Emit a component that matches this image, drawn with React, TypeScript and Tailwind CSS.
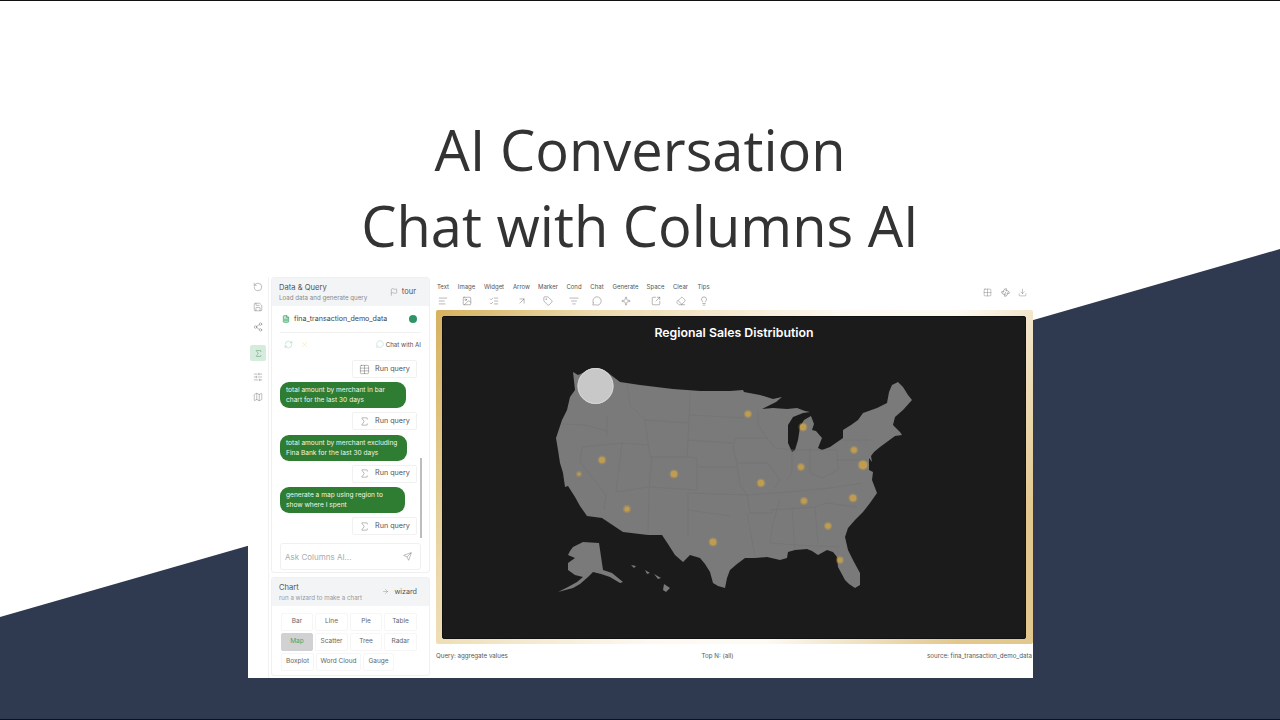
import React from "react";
import { RotateCcw, Save, Share2, Sigma, SlidersHorizontal, Map as MapIcon, Flag, Table, RefreshCw, X, MessageCircle, Send, ArrowRight, AlignLeft, Image as ImageIcon, ListChecks, ArrowUpRight, Tag, ListFilter, Sparkle, SquareArrowOutUpRight, Eraser, Lightbulb, Grid2x2, Download, Fan, FileSpreadsheet } from "lucide-react";

const US = "M573 372 L578 375 L583 373 L590 369 L597 368 L607 372 L620 382 L640 385 L673 389 L700 391 L730 391 L743 390 L744 392 L760 395 L773 399 L782 397 L776 402 L768 406 L762 409 L773 408 L787 409 L797 408 L805 411 L810 412 L803 413 L793 417 L788 425 L788 443 L792 452 L795 450 L798 440 L800 427 L804 420 L811 416 L814 424 L812 430 L816 431 L822 438 L818 448 L822 450 L830 447 L843 438 L843 430 L851 425 L858 420 L863 413 L877 408 L887 403 L889 392 L892 385 L898 382 L903 387 L908 395 L912 400 L903 410 L895 417 L893 425 L900 432 L902 435 L895 436 L880 447 L874 452 L871 456 L872 462 L869 458 L869 470 L873 472 L872 480 L877 493 L870 503 L863 512 L855 520 L848 528 L845 537 L848 550 L854 562 L860 573 L860 585 L855 588 L849 584 L845 580 L838 567 L837 557 L833 552 L827 550 L818 555 L812 551 L807 549 L795 550 L788 552 L787 558 L780 560 L767 557 L755 558 L745 558 L737 564 L730 570 L727 578 L725 588 L718 586 L713 583 L710 572 L705 564 L700 558 L690 555 L683 562 L675 555 L668 544 L662 535 L648 535 L623 532 L602 518 L587 516 L580 506 L575 497 L568 486 L565 487 L563 473 L560 463 L558 450 L556 438 L562 420 L567 410 L570 397 L575 390 Z";
const AK = "M573 547 L583 542 L599 543 L603 570 L612 573 L623 582 L620 583 L610 577 L601 574 L593 572 L588 577 L580 584 L573 588 L558 592 L568 587 L577 582 L583 577 L575 575 L568 570 L568 563 L575 558 L568 555 L570 551 Z";
const borders = "M562 424 L585 425 L607 431 M607 415 L607 437 M582 447 L622 443 M582 447 L580 462 L606 495 L604 510 M622 443 L616 492 L648 487 M627 384 L630 405 L645 420 L689 423 M645 420 L650 457 L687 457 M622 443 L648 445 M652 457 L649 487 L648 535 M650 487 L697 490 M690 392 L689 423 L687 457 L697 458 L697 490 M690 415 L745 418 M688 440 L733 443 M698 467 L737 467 M688 493 L747 495 L790 492 L830 488 L863 483 M688 493 L688 535 M688 510 L730 516 M758 410 L758 425 L767 438 L735 438 L733 448 L737 463 L768 463 M767 438 L775 448 L792 450 L792 473 L787 480 M768 463 L780 480 L775 488 M737 463 L740 485 L747 495 L750 513 L773 513 M810 448 L810 473 M792 450 L837 450 L838 470 M837 460 L867 460 M842 440 L870 440 M810 473 L822 478 L838 470 M780 500 L773 523 L770 543 L795 545 M770 510 L815 507 L827 503 L857 507 M792 508 L795 550 M815 507 L818 543 M795 545 L840 547 M747 513 L755 557";
const dots: [number, number, number][] = [[602, 460, 3], [579, 474, 1.5], [674, 474, 3.2], [627, 509, 2.6], [713, 542, 3.2], [748, 414, 2.8], [803, 427, 3.2], [854, 450, 2.8], [801, 467, 2.8], [863, 465, 4], [761, 483, 3.2], [804, 501, 2.8], [853, 498, 3.2], [828, 526, 2.8], [840, 560, 2.6]];

function RunQuery({ sigma = true }: { sigma?: boolean }) {
  return (
    <div className="self-end mr-[3px] h-[18px] w-[65px] shrink-0 flex items-center gap-[5px] pl-[6px] border border-[#f1f1f1] rounded-[2px] text-[7.2px] text-[#555]">
      {sigma ? <Sigma size={11} strokeWidth={0.9} /> : <Table size={11} strokeWidth={0.9} />}
      <span>Run query</span>
    </div>
  );
}

function Bubble({ a, b, w }: { a: string; b: string; w: string }) {
  return (
    <div className={`${w} h-[26px] shrink-0 ml-[-2px] rounded-[9px] bg-[#2e7d32] text-[#eef6ee] text-[6.6px] leading-[10px] pl-[6px] pt-[3px]`}>
      <div>{a}</div>
      <div>{b}</div>
    </div>
  );
}

function Chip({ t, w, active }: { t: string; w: string; active?: boolean }) {
  return (
    <div className={`${w} h-[18px] flex items-center justify-center rounded-[2px] text-[6.5px] border ${active ? "bg-[#d1d1d3] border-[#d1d1d3] text-[#3aa76d]" : "border-[#f6f6f6] text-[#666]"}`}>
      {t}
    </div>
  );
}

const tools: [string, React.ComponentType<any>, string][] = [
  ["Text", AlignLeft, "w-[20px]"],
  ["Image", ImageIcon, "w-[27px]"],
  ["Widget", ListChecks, "w-[28px]"],
  ["Arrow", ArrowUpRight, "w-[27px]"],
  ["Marker", Tag, "w-[26px]"],
  ["Cond", ListFilter, "w-[26px]"],
  ["Chat", MessageCircle, "w-[20px]"],
  ["Generate", Sparkle, "w-[37px]"],
  ["Space", SquareArrowOutUpRight, "w-[23px]"],
  ["Clear", Eraser, "w-[27px]"],
  ["Tips", Lightbulb, "w-[19px]"],
];

export default function App() {
  return (
    <div className="relative w-[1280px] h-[720px] bg-white overflow-hidden font-['Inter',sans-serif]">
      <svg className="absolute inset-0" width="1280" height="720" viewBox="0 0 1280 720">
        <polygon points="0,617 1280,249 1280,720 0,720" fill="#2f3a50" />
        <rect x="0" y="0" width="1280" height="1" fill="#111" />
        <rect x="0" y="719" width="1280" height="1" fill="#111" />
      </svg>

      <div className="relative flex flex-col items-center pt-[111px] h-[277px] font-['Open_Sans',sans-serif] text-[56px] leading-[76px] text-[#333]">
        <div>AI Conversation</div>
        <div>Chat with Columns AI</div>
      </div>

      <div className="relative ml-[248px] w-[785px] h-[401px] bg-white flex">
        {/* rail */}
        <div className="w-[21px] mr-[2px] shrink-0 flex flex-col items-center pt-[5px] text-[#666] border-r border-[#f2f2f2]">
          <RotateCcw size={10} strokeWidth={1} />
          <Save size={10} strokeWidth={1} className="mt-[10px]" />
          <Share2 size={10} strokeWidth={1} className="mt-[10px]" />
          <div className="w-[16px] h-[16px] mt-[13px] bg-[#d5ebdd] rounded-[2px] flex items-center justify-center text-[#2e7d32]"><Sigma size={9} strokeWidth={1} /></div>
          <SlidersHorizontal size={10} strokeWidth={1} className="mt-[11px]" />
          <MapIcon size={10} strokeWidth={1} className="mt-[10px]" />
        </div>

        {/* left panel */}
        <div className="w-[159px] shrink-0 flex flex-col pb-[2px]">
          <div className="h-[296px] border border-[#f0f0f0] rounded-[3px] flex flex-col">
            <div className="h-[28px] bg-[#f3f4f6] flex items-center justify-between pl-[7px] pr-[13px] shrink-0">
              <div>
                <div className="text-[7.6px] leading-[10px] text-[#555]">Data &amp; Query</div>
                <div className="text-[6.2px] leading-[9px] text-[#888]">Load data and generate query</div>
              </div>
              <div className="flex items-center gap-[4px] text-[7.5px] text-[#555]"><Flag size={8} strokeWidth={1} />tour</div>
            </div>
            <div className="h-[27px] mx-[8px] flex items-center justify-between border-b border-[#f0f0f0] text-[7.1px] text-[#444] shrink-0">
              <div className="flex items-center gap-[4px] pl-[2px]"><FileSpreadsheet size={8} className="text-[#2e9e5b] fill-[#bfe6cf]" />fina_transaction_demo_data</div>
              <div className="w-[8px] h-[8px] rounded-full bg-[#2e9468] mr-[4px]" />
            </div>
            <div className="h-[23px] flex items-center justify-between pl-[12px] pr-[8px] shrink-0">
              <div className="flex gap-[7px]">
                <RefreshCw size={9} strokeWidth={1} className="text-[#7ac79a]" />
                <X size={9} strokeWidth={1} className="text-[#e8d9a0]" />
              </div>
              <div className="flex items-center gap-[2px] text-[6.2px] text-[#555]"><MessageCircle size={8} strokeWidth={1} className="text-[#7ac79a]" />Chat with AI</div>
            </div>
            <div className="relative flex-1 flex flex-col pl-[10px] pr-[9px] pt-[4px] gap-[4.2px] overflow-hidden">
              <RunQuery sigma={false} />
              <Bubble a="total amount by merchant in bar" b="chart for the last 30 days" w="w-[126px]" />
              <RunQuery />
              <Bubble a="total amount by merchant excluding" b="Fina Bank for the last 30 days" w="w-[127px]" />
              <RunQuery />
              <Bubble a="generate a map using region to" b="show where I spent" w="w-[125px]" />
              <RunQuery />
              <div className="absolute right-[7px] top-[102px] w-[2px] h-[80px] bg-[#bdbdbd]" />
            </div>
            <div className="h-[27px] mx-[8px] mb-[2px] shrink-0 border border-[#f0f0f0] rounded-[3px] flex items-center justify-between pl-[4px] pr-[8px] text-[8px] text-[#aaa]">
              <span>Ask Columns AI...</span>
              <Send size={9} strokeWidth={1} className="text-[#555]" />
            </div>
          </div>
          <div className="mt-[4px] flex-1 border border-[#f0f0f0] rounded-[3px]">
            <div className="h-[28px] bg-[#f3f4f6] flex items-center justify-between pl-[7px] pr-[12px]">
              <div>
                <div className="text-[7.6px] leading-[10px] text-[#555]">Chart</div>
                <div className="text-[6.2px] leading-[9px] text-[#999]">run a wizard to make a chart</div>
              </div>
              <div className="flex items-center gap-[5px] text-[7.2px] text-[#555]"><ArrowRight size={7} strokeWidth={1} />wizard</div>
            </div>
            <div className="px-[9px] pt-[7px] flex flex-col gap-[2px]">
              <div className="flex gap-[2px]"><Chip t="Bar" w="w-[32px]" /><Chip t="Line" w="w-[33px]" /><Chip t="Pie" w="w-[32px]" /><Chip t="Table" w="w-[33px]" /></div>
              <div className="flex gap-[2px]"><Chip t="Map" w="w-[32px]" active /><Chip t="Scatter" w="w-[33px]" /><Chip t="Tree" w="w-[32px]" /><Chip t="Radar" w="w-[33px]" /></div>
              <div className="flex gap-[2px]"><Chip t="Boxplot" w="w-[33px]" /><Chip t="Word Cloud" w="w-[45px]" /><Chip t="Gauge" w="w-[31px]" /></div>
            </div>
          </div>
        </div>

        {/* main */}
        <div className="flex-1 flex flex-col pl-[6px] min-w-0">
          <div className="h-[33px] flex justify-between pr-[6px] shrink-0">
            <div className="flex ml-[-3px]">
              {tools.map(([t, I, w]) => (
                <div key={t} className={`${w} flex flex-col items-center pt-[6px] shrink-0`}>
                  <div className="text-[6px] leading-[8px] text-[#555] whitespace-nowrap">{t}</div>
                  <I size={10} strokeWidth={1} className="mt-[5px] text-[#555]" />
                </div>
              ))}
            </div>
            <div className="flex gap-[8.5px] pt-[11px] text-[#666]">
              <Grid2x2 size={9} strokeWidth={1} />
              <Fan size={9} strokeWidth={1.4} />
              <Download size={9} strokeWidth={1} />
            </div>
          </div>
          <div className="w-[597px] h-[334px] pt-[6px] pl-[6px] pr-[7px] pb-[5px] rounded-[2px] bg-[linear-gradient(120deg,#d6b15f_0%,#ecd9ac_20%,#fdf9f2_52%,#fdfaf4_66%,#e3c88e_90%)] shrink-0">
            <div className="relative w-full h-full rounded-[2px] bg-[#1b1b1b] border border-[#111] overflow-hidden">
              <div className="relative text-center text-white font-semibold text-[12.3px] leading-[16px] pt-[8px]">Regional Sales Distribution</div>
              <svg className="absolute left-0 top-0" width="582" height="321" viewBox="443 317 582 321">
                <path d={US} fill="#7a7a7a" />
                <path d={AK} fill="#7a7a7a" />
                <path d="M631 565l5 1l-2 2zM645 570l5 3l-3 1zM654 574l7 4l-3 1zM664 584l6 4l-4 4l-3-2z" fill="#7a7a7a" />
                <path d={borders} fill="none" stroke="#717171" strokeWidth="0.5" />
                {dots.map(([x, y, r], i) => (
                  <g key={i}>
                    <circle cx={x} cy={y} r={r + 1.4} fill="#c9a24a" opacity="0.35" />
                    <circle cx={x} cy={y} r={r} fill="#c09c50" />
                  </g>
                ))}
                <circle cx="595.5" cy="386" r="18" fill="#c8c8c8" />
                <circle cx="595.5" cy="386" r="17.5" fill="none" stroke="#d6d6d6" />
              </svg>
            </div>
          </div>
          <div className="flex justify-between text-[6.2px] text-[#555] mt-[7px] pr-[1px]">
            <span>Query: aggregate values</span>
            <span>Top N: (all)</span>
            <span>source: fina_transaction_demo_data</span>
          </div>
        </div>
      </div>
    </div>
  );
}
